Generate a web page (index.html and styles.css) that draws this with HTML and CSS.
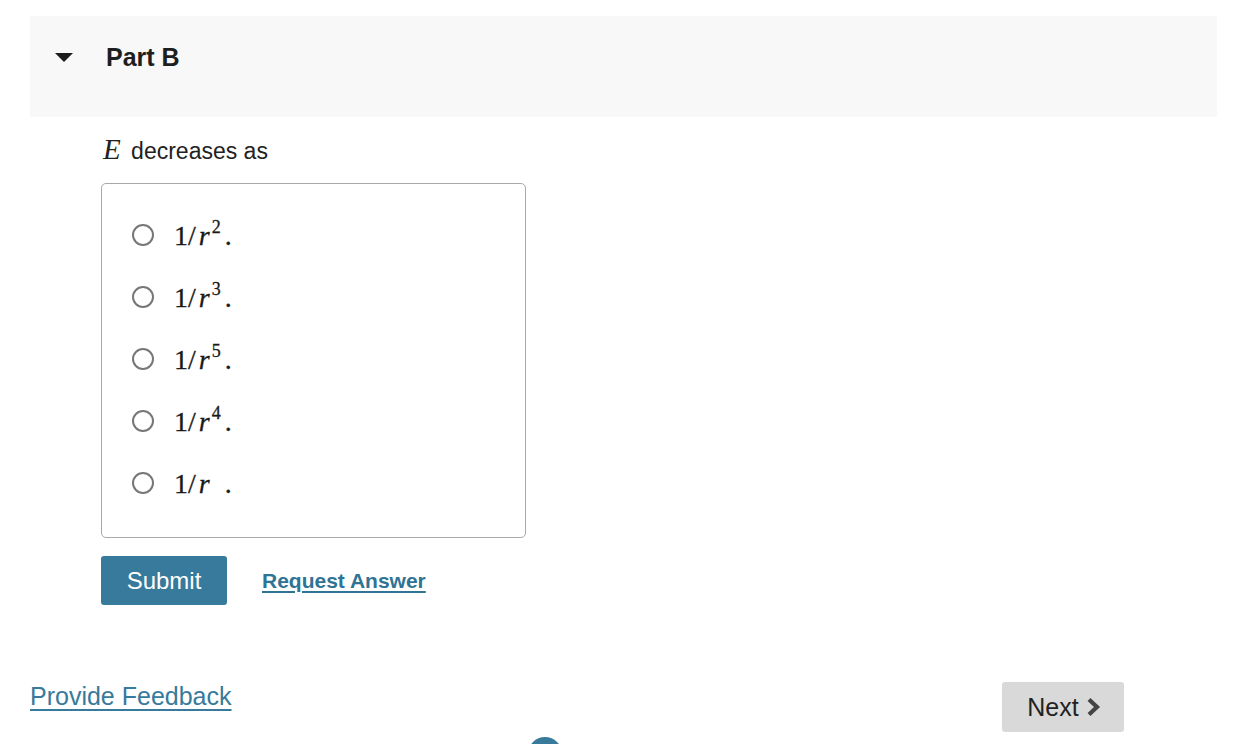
FILE: index.html
```html
<!DOCTYPE html>
<html>
<head>
<meta charset="utf-8">
<link rel="stylesheet" href="styles.css">
</head>
<body>
<div class="page">
  <div class="part-header">
    <span class="caret"></span>
    <h2 class="part-title">Part B</h2>
  </div>
  <div class="part-body">
    <p class="prompt"><span class="mvar">E</span> decreases as</p>
    <div class="options">
      <label class="option"><span class="radio"></span><span class="math">1/<i>r</i><sup>2</sup><span class="dot">.</span></span></label>
      <label class="option"><span class="radio"></span><span class="math">1/<i>r</i><sup>3</sup><span class="dot">.</span></span></label>
      <label class="option"><span class="radio"></span><span class="math">1/<i>r</i><sup>5</sup><span class="dot">.</span></span></label>
      <label class="option"><span class="radio"></span><span class="math">1/<i>r</i><sup>4</sup><span class="dot">.</span></span></label>
      <label class="option"><span class="radio"></span><span class="math">1/<i>r</i><sup class="blank"></sup><span class="dot">.</span></span></label>
    </div>
    <div class="actions">
      <button class="submit">Submit</button>
      <a class="request" href="#">Request Answer</a>
    </div>
  </div>
  <div class="footer">
    <a class="feedback" href="#">Provide Feedback</a>
    <button class="next">Next
      <svg class="chev" width="15" height="20" viewBox="0 0 15 20"><path d="M3 2.5 L11 10 L3 17.5" fill="none" stroke="#444" stroke-width="4.2"/></svg>
    </button>
  </div>
  <div class="bottom-row"><span class="bubble"></span></div>
</div>
</body>
</html>
```

FILE: styles.css
```css
* { box-sizing: border-box; }
html, body { margin: 0; padding: 0; background: #fff; overflow: hidden; }
body { font-family: "Liberation Sans", Arial, sans-serif; color: #222; width: 1252px; height: 744px; }
.page { padding: 16px 35px 0 30px; }
.part-header {
  height: 101px;
  background: #f8f8f8;
  display: flex;
  align-items: flex-start;
  padding: 26px 0 0 25px;
}
.caret {
  width: 0; height: 0;
  border-left: 9px solid transparent;
  border-right: 9px solid transparent;
  border-top: 9px solid #1b1b1b;
  margin-top: 11px;
}
.part-title {
  margin: 0 0 0 33px;
  font-size: 25px;
  line-height: 30px;
  font-weight: 700;
  color: #1e1e1e;
}
.part-body { padding-left: 71px; }
.prompt {
  margin: 20px 0 0 0;
  font-size: 23px;
  line-height: 28px;
  height: 28px;
  color: #222;
}
.mvar { font-family: "Liberation Serif", serif; font-style: italic; font-size: 29px; line-height: 20px; margin-right: 4px; margin-left: 2px; }
.options {
  margin-top: 18px;
  width: 425px;
  height: 355px;
  border: 1px solid #a9a9a9;
  border-radius: 5px;
  padding: 20px 0 0 30px;
  display: flex;
  flex-direction: column;
}
.option {
  height: 62px;
  display: flex;
  align-items: center;
}
.radio {
  width: 22px; height: 22px;
  border: 2px solid #777;
  border-radius: 50%;
  margin-right: 20px;
}
.math {
  font-family: "Liberation Serif", serif;
  font-size: 28px;
  color: #1a1a1a;
  display: inline-flex;
  align-items: baseline;
  margin-top: 2px;
  -webkit-text-stroke: 0.3px #1a1a1a;
}
.math i { font-style: italic; margin-left: 3px; }
.math sup { font-size: 18px; margin-left: 2px; width: 11px; display: inline-block; vertical-align: baseline; line-height: 0; transform: translateY(-12px); }
.math .blank { width: 11px; }
.dot { margin-left: 2px; }
.actions {
  margin-top: 18px;
  display: flex;
  align-items: center;
}
.submit {
  width: 126px; height: 49px;
  background: #377a9b;
  color: #fff;
  border: none;
  border-radius: 3px;
  font-family: "Liberation Sans", Arial, sans-serif;
  font-size: 24px;
  padding: 0;
}
.request {
  margin-left: 35px;
  color: #2f7395;
  font-weight: 700;
  font-size: 21px;
  text-decoration: underline;
  text-underline-offset: 3px;
  text-decoration-thickness: 2px;
}
.footer {
  margin-top: 77px;
  display: flex;
  justify-content: space-between;
  align-items: flex-start;
  padding-right: 93px;
}
.feedback {
  color: #377a9b;
  font-size: 25px;
  line-height: 30px;
  margin-top: -1px;
  text-decoration: underline;
  text-underline-offset: 4px;
  text-decoration-thickness: 2px;
}
.next {
  width: 122px; height: 50px;
  background: #d9d9d9;
  border: none;
  border-radius: 3px;
  font-family: "Liberation Sans", Arial, sans-serif;
  font-size: 25px;
  color: #222;
  display: flex;
  align-items: center;
  justify-content: center;
  gap: 7px;
  padding: 0 0 0 2px;
}
.chev { display: block; }
.bottom-row {
  padding-left: 498px;
  margin-top: 5px;
}
.bubble {
  display: block;
  width: 34px; height: 34px;
  border-radius: 50%;
  background: #377a9b;
}
```
